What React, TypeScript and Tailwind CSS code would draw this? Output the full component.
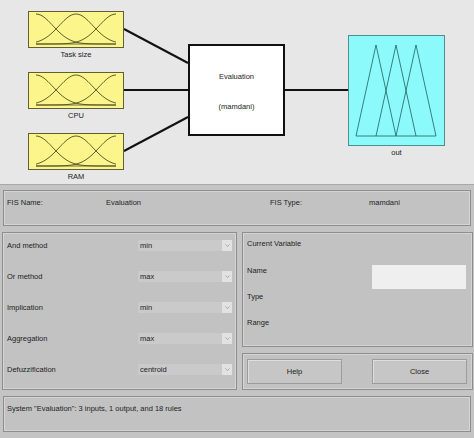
import React from 'react';

const font = { fontFamily: '"Liberation Sans", Arial, sans-serif' };

const gauss = (c: number) => {
  const pts: string[] = [];
  for (let x = 8; x <= 88; x += 2) {
    const y = 33 - 30 * Math.exp(-((x - c) ** 2) / (2 * 17 * 17));
    pts.push(`${x},${y.toFixed(2)}`);
  }
  return pts.join(' ');
};

const InputVar: React.FC<{ top: number; label: string }> = ({ top, label }) => (
  <div className="absolute left-[28px] w-[96px]" style={{ top }}>
    <div className="h-[37px] w-[96px] border border-[#5e5e38] bg-[#fbf58c]">
      <svg width="94" height="35" viewBox="1 1 94 35">
        <line x1="8" y1="33" x2="88" y2="33" stroke="#5f5f2a" strokeWidth="0.9" />
        {[8, 48, 88].map((c) => (
          <polyline key={c} points={gauss(c)} fill="none" stroke="#4f4f20" strokeWidth="0.9" />
        ))}
      </svg>
    </div>
    <div className="mt-[2px] text-center text-[7.5px] leading-[10px] text-[#222]">{label}</div>
  </div>
);

const Panel: React.FC<{ className?: string; children?: React.ReactNode }> = ({ className = '', children }) => (
  <div className={`border border-[#8e8e8e] bg-[#c2c2c2] shadow-[inset_0_0_0_1px_#d4d4d4] ${className}`}>{children}</div>
);

const Select: React.FC<{ value: string }> = ({ value }) => (
  <div className="flex h-[11px] w-[94px] items-center bg-[#cacaca]">
    <span className="flex-1 pl-[2px] text-[7.5px] leading-none text-[#222]">{value}</span>
    <span className="flex h-[11px] w-[10px] items-center justify-center bg-[#e2e2e2]">
      <svg width="5" height="3" viewBox="0 0 5 3">
        <polyline points="0.5,0.5 2.5,2.5 4.5,0.5" fill="none" stroke="#9a9a9a" strokeWidth="0.8" />
      </svg>
    </span>
  </div>
);

const methods = [
  ['And method', 'min'],
  ['Or method', 'max'],
  ['Implication', 'min'],
  ['Aggregation', 'max'],
  ['Defuzzification', 'centroid'],
];

export default function App() {
  return (
    <div className="h-[438px] w-[474px] overflow-hidden bg-[#c4c4c4]" style={font}>
      <div className="relative h-[185px] border-b border-[#a8a8a8] bg-[#e7e7e7]">
        <svg className="absolute inset-0" width="474" height="185">
          <line x1="124" y1="29" x2="188" y2="63" stroke="#111" strokeWidth="2" />
          <line x1="124" y1="90" x2="188" y2="90" stroke="#111" strokeWidth="2" />
          <line x1="124" y1="151" x2="188" y2="117" stroke="#111" strokeWidth="2" />
          <line x1="285" y1="90" x2="348" y2="90" stroke="#111" strokeWidth="2" />
        </svg>
        <InputVar top={11} label="Task size" />
        <InputVar top={72} label="CPU" />
        <InputVar top={133} label="RAM" />
        <div className="absolute left-[188px] top-[44px] flex h-[92px] w-[97px] flex-col items-center border-2 border-[#111] bg-white pt-[26px] text-[7.5px] leading-[10px] text-[#222]">
          <div>Evaluation</div>
          <div className="mt-[20px]">(mamdani)</div>
        </div>
        <div className="absolute left-[348px] top-[35px] w-[97px]">
          <div className="h-[111px] w-[97px] border border-[#4f8f8f] bg-[#8cfafa]">
            <svg width="95" height="109" viewBox="1 1 95 109">
              <line x1="8" y1="101" x2="88" y2="101" stroke="#1f5f5f" strokeWidth="0.8" />
              <polyline points="8,101 28,10 48,101" fill="none" stroke="#1f5f5f" strokeWidth="0.8" />
              <polyline points="28,101 48,10 68,101" fill="none" stroke="#1f5f5f" strokeWidth="0.8" />
              <polyline points="48,101 68,10 88,101" fill="none" stroke="#1f5f5f" strokeWidth="0.8" />
            </svg>
          </div>
          <div className="mt-[2px] text-center text-[7.5px] leading-[10px] text-[#222]">out</div>
        </div>
      </div>

      <div className="px-[3px] pt-[5px]">
        <Panel className="flex h-[36px] items-start pt-[7px] text-[7.5px] leading-[10px] text-[#222]">
          <span className="w-[102px] pl-[3px]">FIS Name:</span>
          <span className="w-[164px]">Evaluation</span>
          <span className="w-[99px]">FIS Type:</span>
          <span>mamdani</span>
        </Panel>
      </div>

      <div className="mt-[6px] flex gap-[5px] pl-[2px] pr-[1px]">
        <Panel className="flex h-[158px] w-[235px] flex-col gap-[20px] px-[4px] pt-[7px]">
          {methods.map(([label, value]) => (
            <div key={label} className="flex h-[11px] items-center">
              <span className="w-[131px] text-[7.5px] leading-none text-[#222]">{label}</span>
              <Select value={value} />
            </div>
          ))}
        </Panel>
        <div className="flex flex-1 flex-col gap-[6px]">
          <Panel className="relative h-[115px] pl-[4px] pt-[6px] text-[7.5px] leading-[10px] text-[#222]">
            <div>Current Variable</div>
            <div className="mt-[17px]">Name</div>
            <div className="mt-[16px]">Type</div>
            <div className="mt-[16px]">Range</div>
            <div className="absolute left-[129px] top-[32px] h-[24px] w-[94px] bg-[#efefef]" />
          </Panel>
          <Panel className="flex h-[37px] items-center gap-[30px] px-[4px]">
            <button className="h-[25px] w-[95px] border border-[#9c9c9c] bg-[#c6c6c6] text-[7.5px] text-[#222] shadow-[inset_1px_1px_0_#dedede]">
              Help
            </button>
            <button className="h-[25px] w-[95px] border border-[#9c9c9c] bg-[#c6c6c6] text-[7.5px] text-[#222] shadow-[inset_1px_1px_0_#dedede]">
              Close
            </button>
          </Panel>
        </div>
      </div>

      <div className="px-[3px] pt-[6px]">
        <Panel className="h-[36px] pl-[3px] pt-[7px] text-[7.5px] leading-[10px] text-[#222]">
          System "Evaluation": 3 inputs, 1 output, and 18 rules
        </Panel>
      </div>
    </div>
  );
}
